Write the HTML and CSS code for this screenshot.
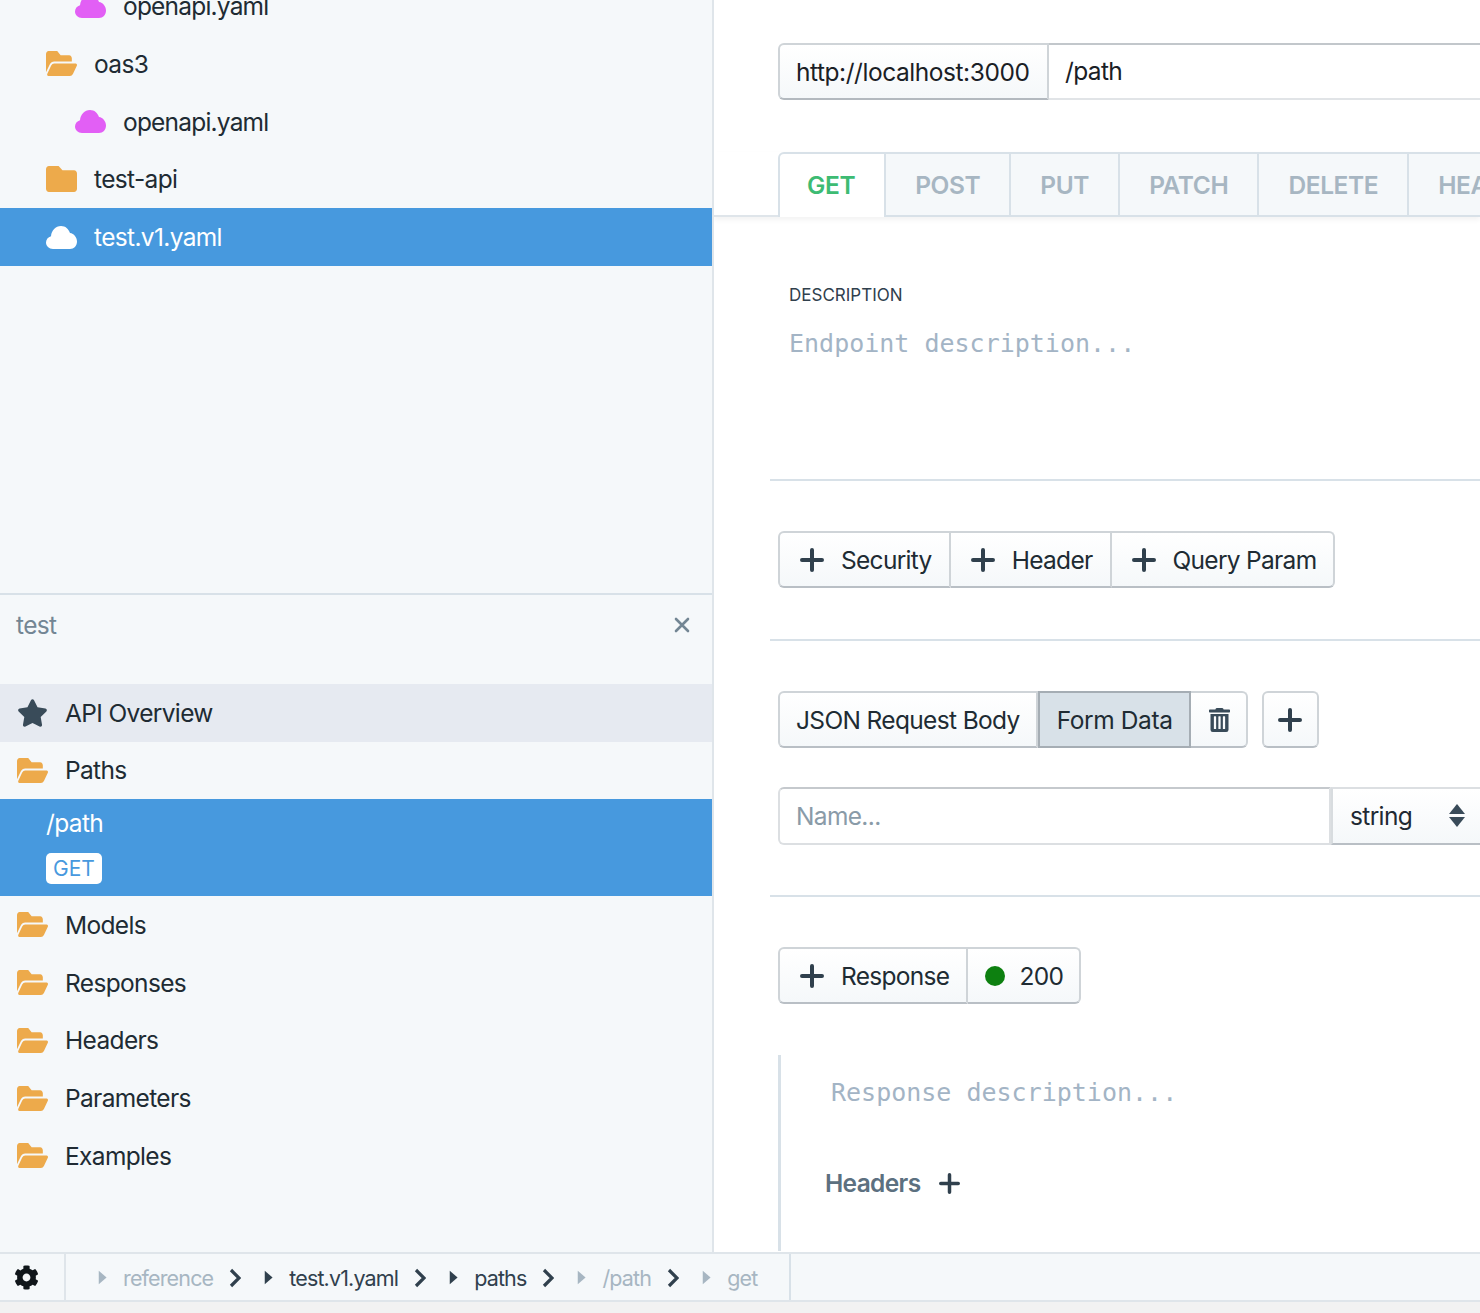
FILE: index.html
```html
<!DOCTYPE html>
<html lang="en">
<head>
<meta charset="utf-8">
<title>API Designer</title>
<link rel="stylesheet" href="styles.css">
</head>
<body>
<svg class="defs" width="0" height="0" aria-hidden="true">
  <symbol id="i-open" viewBox="0 64 576 384" preserveAspectRatio="none"><path d="M572.694 292.093L500.27 416.248A63.997 63.997 0 0 1 444.989 448H45.025c-18.523 0-30.064-20.093-20.731-36.093l72.424-124.155A64 64 0 0 1 152 256h399.964c18.523 0 30.064 20.093 20.73 36.093zM152 224h328v-48c0-26.51-21.49-48-48-48H272l-64-64H48C21.49 64 0 85.49 0 112v278.046l69.077-118.418C86.214 242.25 117.989 224 152 224z"/></symbol>
  <symbol id="i-folder" viewBox="0 64 512 384" preserveAspectRatio="none"><path d="M464 128H272l-64-64H48C21.49 64 0 85.49 0 112v288c0 26.51 21.49 48 48 48h416c26.51 0 48-21.49 48-48V176c0-26.51-21.49-48-48-48z"/></symbol>
  <symbol id="i-cloud" viewBox="0 0 31 23"><path d="M7 23C3 23 0 20 0 16.5 0 13.5 2 11 5 10.2 5.5 4.5 9.5 0 15 0c4.5 0 7.5 2.8 9 7 4 .5 7 4.5 7 8.5 0 4.500-3 7.500-7 7.500z"/></symbol>
  <symbol id="i-star" viewBox="0 0 576 512"><path d="M259.3 17.8L194 150.2 47.9 171.5c-26.2 3.8-36.7 36.1-17.7 54.6l105.7 103-25 145.5c-4.5 26.3 23.2 46 46.4 33.7L288 439.6l130.7 68.7c23.2 12.2 50.9-7.4 46.4-33.7l-25-145.5 105.7-103c19-18.5 8.5-50.8-17.7-54.6L382 150.2 316.7 17.800c-11.7-23.6-45.6-23.9-57.4 0z"/></symbol>
  <symbol id="i-plus" viewBox="0 0 24 24"><path d="M10 2a2 2 0 0 1 4 0v8h8a2 2 0 0 1 0 4h-8v8a2 2 0 0 1-4 0v-8H2a2 2 0 0 1 0-4h8z"/></symbol>
  <symbol id="i-cog" viewBox="0 0 512 512"><path d="M487.4 315.7l-42.6-24.6c4.3-23.2 4.3-47 0-70.2l42.6-24.6c4.9-2.8 7.1-8.6 5.5-14-11.1-35.6-30-67.8-54.7-94.6-3.8-4.1-10-5.1-14.8-2.3L380.8 110c-17.9-15.4-38.5-27.3-60.8-35.1V25.8c0-5.6-3.9-10.5-9.4-11.7-36.7-8.2-74.3-7.8-109.2 0-5.5 1.2-9.4 6.1-9.4 11.7V75c-22.2 7.9-42.8 19.8-60.8 35.1L88.7 85.5c-4.9-2.8-11-1.9-14.8 2.3-24.7 26.7-43.6 58.9-54.7 94.6-1.7 5.4.6 11.2 5.5 14L67.3 221c-4.3 23.2-4.3 47 0 70.2l-42.6 24.6c-4.9 2.8-7.1 8.6-5.5 14 11.1 35.6 30 67.8 54.7 94.6 3.8 4.1 10 5.1 14.8 2.3l42.6-24.6c17.9 15.4 38.5 27.3 60.8 35.1v49.2c0 5.6 3.9 10.5 9.4 11.7 36.7 8.2 74.3 7.8 109.2 0 5.5-1.2 9.4-6.1 9.4-11.7v-49.2c22.2-7.9 42.8-19.8 60.8-35.1l42.6 24.6c4.9 2.8 11 1.9 14.8-2.3 24.7-26.7 43.6-58.9 54.7-94.6 1.5-5.5-.7-11.3-5.6-14.1zM256 336c-44.1 0-80-35.9-80-80s35.9-80 80-80 80 35.9 80 80-35.9 80-80 80z"/></symbol>
  <symbol id="i-trash" viewBox="0 0 448 512"><path d="M432 32H312l-9.400-18.700A24 24 0 0 0 281.100 0H166.800a23.700 23.700 0 0 0-21.400 13.300L136 32H16A16 16 0 0 0 0 48v32a16 16 0 0 0 16 16h416a16 16 0 0 0 16-16V48a16 16 0 0 0-16-16zM32 128v336a48 48 0 0 0 48 48h288a48 48 0 0 0 48-48V128zm80 48h32a8 8 0 0 1 8 8v256a8 8 0 0 1-8 8h-32a8 8 0 0 1-8-8V184a8 8 0 0 1 8-8zm96 0h32a8 8 0 0 1 8 8v256a8 8 0 0 1-8 8h-32a8 8 0 0 1-8-8V184a8 8 0 0 1 8-8zm96 0h32a8 8 0 0 1 8 8v256a8 8 0 0 1-8 8h-32a8 8 0 0 1-8-8V184a8 8 0 0 1 8-8z"/></symbol>
  <symbol id="i-caret" viewBox="0 0 8 14"><path d="M0.500 0.600v12.800L7.800 7z"/></symbol>
  <symbol id="i-chev" viewBox="0 0 12 20"><path d="M2 2l8 8-8 8" fill="none" stroke="currentColor" stroke-width="3.200"/></symbol>
  <symbol id="i-x" viewBox="0 0 16 16"><path d="M2 2l12 12M14 2L2 14" fill="none" stroke="currentColor" stroke-width="2.600" stroke-linecap="round"/></symbol>
</svg>

<div class="app">
  <div class="workspace">
    <aside class="sidebar">
      <section class="files">
        <ul class="tree tree-scrolled">
          <li class="row depth-2"><svg class="ic ic-cloud pink"><use href="#i-cloud"/></svg><span>openapi.yaml</span></li>
          <li class="row depth-1"><svg class="ic ic-open"><use href="#i-open"/></svg><span>oas3</span></li>
          <li class="row depth-2"><svg class="ic ic-cloud pink"><use href="#i-cloud"/></svg><span>openapi.yaml</span></li>
          <li class="row depth-1"><svg class="ic ic-folder"><use href="#i-folder"/></svg><span>test-api</span></li>
          <li class="row depth-1 selected"><svg class="ic ic-cloud white"><use href="#i-cloud"/></svg><span>test.v1.yaml</span></li>
        </ul>
      </section>
      <section class="outline">
        <div class="search"><span class="search-text">test</span><svg class="search-clear"><use href="#i-x"/></svg></div>
        <ul class="tree">
          <li class="row active"><svg class="ic ic-star"><use href="#i-star"/></svg><span>API Overview</span></li>
          <li class="row"><svg class="ic ic-open"><use href="#i-open"/></svg><span>Paths</span></li>
          <li class="path-row">
            <span class="path-name">/path</span>
            <span class="method-badge">GET</span>
          </li>
          <li class="row"><svg class="ic ic-open"><use href="#i-open"/></svg><span>Models</span></li>
          <li class="row"><svg class="ic ic-open"><use href="#i-open"/></svg><span>Responses</span></li>
          <li class="row"><svg class="ic ic-open"><use href="#i-open"/></svg><span>Headers</span></li>
          <li class="row"><svg class="ic ic-open"><use href="#i-open"/></svg><span>Parameters</span></li>
          <li class="row"><svg class="ic ic-open"><use href="#i-open"/></svg><span>Examples</span></li>
        </ul>
      </section>
    </aside>

    <main class="editor">
      <div class="url-group">
        <div class="url-host">http://localhost:3000</div>
        <div class="url-path">/path</div>
      </div>

      <div class="tabs">
        <div class="tab tab-get">GET</div>
        <div class="tab">POST</div>
        <div class="tab">PUT</div>
        <div class="tab">PATCH</div>
        <div class="tab">DELETE</div>
        <div class="tab">HEAD</div>
      </div>

      <section class="block block-desc">
        <div class="label">DESCRIPTION</div>
        <div class="mono-placeholder">Endpoint description...</div>
      </section>

      <section class="block block-actions">
        <div class="btn-group">
          <div class="btn"><svg class="plus"><use href="#i-plus"/></svg>Security</div>
          <div class="btn"><svg class="plus"><use href="#i-plus"/></svg>Header</div>
          <div class="btn"><svg class="plus"><use href="#i-plus"/></svg>Query Param</div>
        </div>
      </section>

      <section class="block block-body">
        <div class="btn-line">
          <div class="btn-group">
            <div class="btn btn-text">JSON Request Body</div>
            <div class="btn btn-on">Form Data</div>
            <div class="btn btn-icon"><svg class="trash"><use href="#i-trash"/></svg></div>
          </div>
          <div class="btn-group"><div class="btn btn-add"><svg class="plus plus-only"><use href="#i-plus"/></svg></div></div>
        </div>
        <div class="field">
          <div class="field-name">Name...</div>
          <div class="field-type">string<span class="updown"><i class="up"></i><i class="down"></i></span></div>
        </div>
      </section>

      <section class="block block-resp">
        <div class="btn-group">
          <div class="btn"><svg class="plus"><use href="#i-plus"/></svg>Response</div>
          <div class="btn btn-code"><span class="dot"></span>200</div>
        </div>
        <div class="response">
          <div class="mono-placeholder">Response description...</div>
          <div class="resp-headers"><span>Headers</span><svg class="plus plus-small"><use href="#i-plus"/></svg></div>
        </div>
      </section>
    </main>
  </div>

  <footer class="statusbar">
    <div class="gear"><svg class="cog"><use href="#i-cog"/></svg></div>
    <nav class="crumbs">
      <span class="crumb muted"><svg class="caret"><use href="#i-caret"/></svg>reference</span><svg class="chev"><use href="#i-chev"/></svg>
      <span class="crumb"><svg class="caret"><use href="#i-caret"/></svg>test.v1.yaml</span><svg class="chev"><use href="#i-chev"/></svg>
      <span class="crumb"><svg class="caret"><use href="#i-caret"/></svg>paths</span><svg class="chev"><use href="#i-chev"/></svg>
      <span class="crumb muted"><svg class="caret"><use href="#i-caret"/></svg>/path</span><svg class="chev"><use href="#i-chev"/></svg>
      <span class="crumb muted"><svg class="caret"><use href="#i-caret"/></svg>get</span>
    </nav>
  </footer>
</div>
</body>
</html>
```
FILE: styles.css
```css
* { box-sizing: border-box; }
html, body { margin: 0; height: 100%; }
body { background: #f2f2f2; font-family: Inter, "Liberation Sans", sans-serif; font-size: 24.5px; letter-spacing: -0.65px; color: #1f2933; overflow: hidden; }
.defs { position: absolute; }
ul { list-style: none; margin: 0; padding: 0; }

.app { display: flex; flex-direction: column; height: 1313px; width: 1480px; overflow: hidden; }
.workspace { display: flex; height: 1252px; flex: none; }

.sidebar { width: 714px; flex: none; display: flex; flex-direction: column; background: #f5f8fa; border-right: 2px solid #dfe5ea; }
.files { height: 595px; flex: none; border-bottom: 2px solid #d8e1e8; overflow: hidden; }
.tree-scrolled { margin-top: -22.75px; }
.outline { flex: 1; }
.row { height: 57.75px; display: flex; align-items: center; padding-left: 17px; color: #202b33; }
.row .ic { margin-right: 17px; fill: #edaa4b; flex: none; }
.row.depth-1 { padding-left: 46px; }
.row.depth-2 { padding-left: 75px; }
.depth-2 span { letter-spacing: -0.8px; }
.selected { background: #4799de; }
.row.selected { color: #fff; }
.active { background: #e6eaf1; }
.ic-open { width: 31px; height: 25px; }
.ic-folder { width: 31px; height: 26px; }
.ic-cloud { width: 31px; height: 23px; }
.ic-star { width: 31px; height: 30px; }
.row .ic-star { fill: #394b59; }
.row .pink { fill: #e25ff5; }
.row .white { fill: #fff; }

.search { height: 88.75px; display: flex; justify-content: space-between; padding: 14px 22px 0 16px; color: #738694; }
.search-text { line-height: 32px; }
.search-clear { width: 16px; height: 16px; margin-top: 8px; color: #738694; }

.path-row { background: #4799de; color: #fff; height: 96.75px; padding: 9px 0 0 46px; display: flex; flex-direction: column; align-items: flex-start; }
.path-name { line-height: 30px; }
.method-badge { margin-top: 15px; background: #fff; color: #4799de; font-size: 21px; letter-spacing: 0; border-radius: 5px; height: 31px; width: 56px; text-align: center; line-height: 31px; }

.editor { flex: 1; min-width: 0; background: #fff; overflow: hidden; display: flex; flex-direction: column; padding-top: 43px; }
.url-group { margin-left: 64px; display: flex; height: 57px; width: 900px; flex: none; }
.url-host { width: 271px; flex: none; padding-left: 16px; line-height: 54px; letter-spacing: -0.45px; background: linear-gradient(#fff, #f5f8fa); border: 2px solid #cfd4d8; border-bottom-color: #b3b9bf; border-radius: 6px 0 0 6px; color: #1a2026; }
.url-path { flex: 1; padding-left: 16px; line-height: 53px; border-top: 2px solid #c2c7cb; border-bottom: 2px solid #e1e4e7; color: #1a2026; }

.tabs { margin-top: 52px; display: flex; height: 65px; flex: none; padding-left: 64px; border-bottom: 2px solid #dfe5ea; box-shadow: 0 3px 5px rgba(16,22,26,.05); }
.tab { height: 65px; padding: 0 29px; line-height: 62px; letter-spacing: -0.4px; background: #f5f8fa; color: #a7b6c2; font-weight: 600; border: 2px solid #d8e1e8; border-left: 0; white-space: nowrap; flex: none; }
.tab-get { background: #fff; color: #3dbb73; border-left: 2px solid #d8e1e8; border-bottom: 0; border-radius: 6px 0 0 0; padding-left: 27px; }

.block { margin-left: 56px; flex: none; border-bottom: 2px solid #d8e1e8; }
.block-desc { height: 264px; padding: 68px 0 0 19px; }
.label { font-size: 17px; letter-spacing: 0; line-height: 20px; color: #30404d; }
.mono-placeholder { font-family: "DejaVu Sans Mono", monospace; font-size: 25px; letter-spacing: 0; line-height: 40px; color: #a3b4c5; }
.block-desc .mono-placeholder { margin-top: 19px; }
.block-actions { height: 160px; padding: 50px 0 0 8px; }
.block-body { height: 256px; padding: 50px 0 0 8px; }
.block-resp { padding: 50px 0 0 8px; border-bottom: 0; }

.btn-line { display: flex; gap: 14px; }
.btn-group { display: inline-flex; height: 57px; vertical-align: top; }
.btn { display: flex; align-items: center; padding: 0 17px 0 20px; letter-spacing: -0.7px; color: #202b33; background: linear-gradient(#fff, #f5f8fa); border: 2px solid #cfd4d8; border-bottom-color: #b9bfc5; border-left-width: 0; white-space: nowrap; }
.btn:first-child { border-left-width: 2px; border-radius: 6px 0 0 6px; }
.btn:last-child { border-radius: 0 6px 6px 0; }
.btn:first-child:last-child { border-radius: 6px; }
.btn-group .btn-text { padding: 0 16px; letter-spacing: -0.65px; }
.btn-group .btn-on { background: #d8e1e8; border-color: #a5adb4; padding: 0 16px 0 17px; border-left: 2px solid #a5adb4; letter-spacing: -0.4px; }
.btn-group .btn-icon { padding: 0 16px 0 18px; }
.btn-group .btn-add { padding: 0 15px 0 14px; }
.plus { width: 24px; height: 24px; fill: #30404d; margin-right: 17px; flex: none; }
.plus-only { margin: 0; }
.trash { width: 21px; height: 24px; fill: #394b59; }
.btn-group .btn-code { padding: 0 16px 0 17px; }
.dot { width: 20px; height: 20px; border-radius: 50%; background: #0d8010; margin-right: 14px; }

.field { margin-top: 39px; height: 58px; display: flex; }
.field-name { width: 553px; flex: none; padding-left: 16px; line-height: 54px; color: #8a9ba8; border: 2px solid #dcdfe2; border-top-color: #c5c9cd; border-radius: 6px 0 0 6px; }
.field-type { flex: 1; padding-left: 17px; line-height: 54px; display: flex; background: linear-gradient(#fff, #f5f8fa); border-top: 2px solid #dcdfe2; border-bottom: 2px solid #b9bfc5; border-left: 2px solid #d8dcdf; position: relative; }
.updown { position: absolute; left: 116px; top: 15px; display: flex; flex-direction: column; gap: 3px; }
.updown i { display: block; width: 0; height: 0; border-left: 8.5px solid transparent; border-right: 8.5px solid transparent; }
.updown .up { border-bottom: 10px solid #394b59; }
.updown .down { border-top: 10px solid #394b59; }

.response { margin-top: 51px; height: 196px; border-left: 3px solid #d8e1e8; padding: 18px 0 0 50px; }
.resp-headers { margin: 54px 0 0 -6px; display: flex; align-items: center; color: #5c7080; font-weight: 600; line-height: 32px; }
.plus-small { width: 21px; height: 21px; margin: 0 0 0 19px; }

.statusbar { height: 50px; flex: none; display: flex; background: #f5f8fa; border-top: 2px solid #dfe5ea; border-bottom: 2px solid #dfe5ea; font-size: 21.5px; letter-spacing: -0.85px; }
.gear { width: 66px; border-right: 2px solid #dfe5ea; display: flex; align-items: center; padding-left: 14px; }
.cog { width: 25px; height: 25px; fill: #10161a; }
.crumbs { width: 725px; border-right: 2px solid #d8e1e8; display: flex; align-items: center; padding: 1px 0 0 32px; color: #30404d; }
.crumb { display: flex; align-items: center; white-space: nowrap; }
.caret { width: 9px; height: 15px; margin-right: 16px; fill: #30404d; flex: none; }
.chev { width: 12px; height: 20px; margin: 0 23px 0 16px; color: #30404d; flex: none; }
.muted { color: #a7b6c2; }
.muted .caret { fill: #a7b6c2; }
```
